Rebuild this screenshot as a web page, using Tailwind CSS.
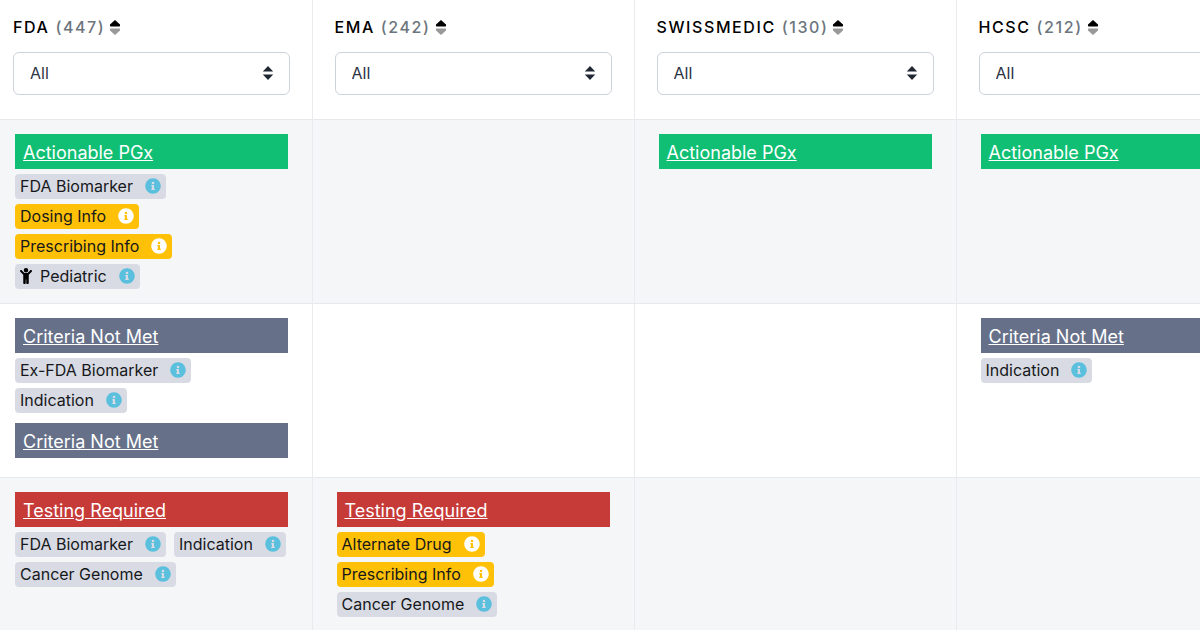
<!DOCTYPE html>
<html lang="en">
<head>
    <meta charset="UTF-8">
    <meta name="viewport" content="width=device-width, initial-scale=1.0">
    <title>Drug Label Annotations</title>
    <script src="https://cdn.jsdelivr.net/npm/@tailwindcss/browser@4"></script>
</head>
<body class="bg-white font-['Inter',sans-serif] text-black">
<!-- Shared icons -->
<svg class="hidden" aria-hidden="true">
    <symbol id="info" viewBox="0 0 512 512">
        <path fill="currentColor" d="M256 8C119 8 8 119 8 256s111 248 248 248 248-111 248-248S393 8 256 8zm0 110a42 42 0 1 1 0 84 42 42 0 0 1 0-84zm56 254a12 12 0 0 1-12 12h-88a12 12 0 0 1-12-12v-24a12 12 0 0 1 12-12h12v-64h-12a12 12 0 0 1-12-12v-24a12 12 0 0 1 12-12h64a12 12 0 0 1 12 12v100h12a12 12 0 0 1 12 12v24z"/>
    </symbol>
    <symbol id="child" viewBox="0 0 384 512">
        <path fill="currentColor" d="M120 72a72 72 0 1 1 144 0 72 72 0 0 1-144 0zm254.600 1.400c-12.500-12.500-32.800-12.500-45.300 0L242.700 160H141.300L54.600 73.400c-12.500-12.500-32.800-12.500-45.300 0s-12.500 32.800 0 45.300L104 213.300V480c0 17.700 14.300 32 32 32h16c17.700 0 32-14.300 32-32V368h16v112c0 17.700 14.300 32 32 32h16c17.700 0 32-14.300 32-32V213.300l94.600-94.600c12.500-12.500 12.500-32.800 0-45.300z"/>
    </symbol>
    <symbol id="sort" viewBox="0 0 12 15">
        <path d="M6 0 11 4.600Q11.500 6.500 10.300 6.500H1.700Q.5 6.500 1 4.600z" fill="#000"/>
        <path d="M6 15 11 10.400Q11.500 8.500 10.300 8.500H1.700Q.5 8.500 1 10.400z" fill="#999"/>
    </symbol>
    <symbol id="updown" viewBox="0 0 12 14">
        <path d="M6 0 11.200 5.500H.8zM6 14 11.200 8.500H.8z" fill="#1f2733"/>
    </symbol>
</svg>

<div class="overflow-x-hidden">
    <table class="w-[1278px] table-fixed border-collapse">
        <colgroup>
            <col class="w-[312px]">
            <col class="w-[322px]">
            <col class="w-[322px]">
            <col class="w-[322px]">
        </colgroup>
        <thead>
        <tr class="border-b border-[#e6e8eb] text-left align-top">
            <th class="border-r border-[#e9ebee] pt-[15px] pr-[22px] pb-6 pl-[13px] font-normal">
                <button type="button" class="mb-[13px] flex items-center gap-1 text-base leading-6 font-medium tracking-widest">
                    <span>FDA <span class="text-[#6c757d]">(447)</span></span>
                    <svg class="h-[15px] w-3"><use href="#sort"/></svg>
                </button>
                <div class="relative">
                    <select aria-label="FDA" class="h-[43px] w-full appearance-none rounded-md border border-[#cdd3db] bg-white px-4 pb-[2px] text-base text-[#2b3442]"><option>All</option></select>
                    <svg class="pointer-events-none absolute top-[14px] right-4 h-[14px] w-3"><use href="#updown"/></svg>
                </div>
            </th>
            <th class="border-r border-[#e9ebee] px-[22px] pt-[15px] pb-6 font-normal">
                <button type="button" class="mb-[13px] flex items-center gap-1 text-base leading-6 font-medium tracking-widest">
                    <span>EMA <span class="text-[#6c757d]">(242)</span></span>
                    <svg class="h-[15px] w-3"><use href="#sort"/></svg>
                </button>
                <div class="relative">
                    <select aria-label="EMA" class="h-[43px] w-full appearance-none rounded-md border border-[#cdd3db] bg-white px-4 pb-[2px] text-base text-[#2b3442]"><option>All</option></select>
                    <svg class="pointer-events-none absolute top-[14px] right-4 h-[14px] w-3"><use href="#updown"/></svg>
                </div>
            </th>
            <th class="border-r border-[#e9ebee] px-[22px] pt-[15px] pb-6 font-normal">
                <button type="button" class="mb-[13px] flex items-center gap-1 text-base leading-6 font-medium tracking-widest">
                    <span>SWISSMEDIC <span class="text-[#6c757d]">(130)</span></span>
                    <svg class="h-[15px] w-3"><use href="#sort"/></svg>
                </button>
                <div class="relative">
                    <select aria-label="SWISSMEDIC" class="h-[43px] w-full appearance-none rounded-md border border-[#cdd3db] bg-white px-4 pb-[2px] text-base text-[#2b3442]"><option>All</option></select>
                    <svg class="pointer-events-none absolute top-[14px] right-4 h-[14px] w-3"><use href="#updown"/></svg>
                </div>
            </th>
            <th class="px-[22px] pt-[15px] pb-6 font-normal">
                <button type="button" class="mb-[13px] flex items-center gap-1 text-base leading-6 font-medium tracking-widest">
                    <span>HCSC <span class="text-[#6c757d]">(212)</span></span>
                    <svg class="h-[15px] w-3"><use href="#sort"/></svg>
                </button>
                <div class="relative">
                    <select aria-label="HCSC" class="h-[43px] w-full appearance-none rounded-md border border-[#cdd3db] bg-white px-4 pb-[2px] text-base text-[#2b3442]"><option>All</option></select>
                    <svg class="pointer-events-none absolute top-[14px] right-4 h-[14px] w-3"><use href="#updown"/></svg>
                </div>
            </th>
        </tr>
        </thead>
        <tbody>
        <tr class="border-b border-[#e6e8eb] bg-[#f5f6f8] align-top">
            <td class="border-r border-[#e9ebee] py-[14px] pr-6 pl-[15px]">
                <a href="#" class="mb-[5px] block bg-[#10bf74] px-2 pt-[2px] text-lg leading-[33px] text-white underline">Actionable PGx</a>
                <div class="flex flex-col items-start gap-[5px]">
                    <span class="flex h-[25px] items-center gap-3 rounded bg-[#d8dbe3] px-[5px] pb-[2px] text-base text-[#16181b]">FDA Biomarker <svg class="size-4 text-[#5bc0de]"><use href="#info"/></svg></span>
                    <span class="flex h-[25px] items-center gap-3 rounded bg-[#ffc107] px-[5px] pb-[2px] text-base text-[#16181b]">Dosing Info <svg class="size-4 text-white"><use href="#info"/></svg></span>
                    <span class="flex h-[25px] items-center gap-3 rounded bg-[#ffc107] px-[5px] pb-[2px] text-base text-[#16181b]">Prescribing Info <svg class="size-4 text-white"><use href="#info"/></svg></span>
                    <span class="flex h-[25px] items-center gap-3 rounded bg-[#d8dbe3] px-[5px] pb-[2px] text-base text-[#16181b]"><span class="flex items-center gap-2"><svg class="h-4 w-3 text-black"><use href="#child"/></svg>Pediatric</span> <svg class="size-4 text-[#5bc0de]"><use href="#info"/></svg></span>
                </div>
            </td>
            <td class="border-r border-[#e9ebee]"></td>
            <td class="border-r border-[#e9ebee] px-6 py-[14px]">
                <a href="#" class="mb-[5px] block bg-[#10bf74] px-2 pt-[2px] text-lg leading-[33px] text-white underline">Actionable PGx</a>
            </td>
            <td class="px-6 py-[14px]">
                <a href="#" class="mb-[5px] block bg-[#10bf74] px-2 pt-[2px] text-lg leading-[33px] text-white underline">Actionable PGx</a>
            </td>
        </tr>
        <tr class="border-b border-[#e6e8eb] bg-white align-top">
            <td class="border-r border-[#e9ebee] py-[14px] pr-6 pl-[15px]">
                <a href="#" class="mb-[5px] block bg-[#667189] px-2 pt-[2px] text-lg leading-[33px] text-white underline">Criteria Not Met</a>
                <div class="mb-[10px] flex flex-col items-start gap-[5px]">
                    <span class="flex h-[25px] items-center gap-3 rounded bg-[#d8dbe3] px-[5px] pb-[2px] text-base text-[#16181b]">Ex-FDA Biomarker <svg class="size-4 text-[#5bc0de]"><use href="#info"/></svg></span>
                    <span class="flex h-[25px] items-center gap-3 rounded bg-[#d8dbe3] px-[5px] pb-[2px] text-base text-[#16181b]">Indication <svg class="size-4 text-[#5bc0de]"><use href="#info"/></svg></span>
                </div>
                <a href="#" class="mb-[5px] block bg-[#667189] px-2 pt-[2px] text-lg leading-[33px] text-white underline">Criteria Not Met</a>
            </td>
            <td class="border-r border-[#e9ebee]"></td>
            <td class="border-r border-[#e9ebee]"></td>
            <td class="px-6 py-[14px]">
                <a href="#" class="mb-[5px] block bg-[#667189] px-2 pt-[2px] text-lg leading-[33px] text-white underline">Criteria Not Met</a>
                <div class="flex flex-col items-start gap-[5px]">
                    <span class="flex h-[25px] items-center gap-3 rounded bg-[#d8dbe3] px-[5px] pb-[2px] text-base text-[#16181b]">Indication <svg class="size-4 text-[#5bc0de]"><use href="#info"/></svg></span>
                </div>
            </td>
        </tr>
        <tr class="bg-[#f5f6f8] align-top">
            <td class="border-r border-[#e9ebee] py-[14px] pr-6 pl-[15px]">
                <a href="#" class="mb-[5px] block bg-[#c63a38] px-2 pt-[2px] text-lg leading-[33px] text-white underline">Testing Required</a>
                <div class="flex flex-wrap gap-x-2 gap-y-[5px]">
                    <span class="flex h-[25px] items-center gap-3 rounded bg-[#d8dbe3] px-[5px] pb-[2px] text-base text-[#16181b]">FDA Biomarker <svg class="size-4 text-[#5bc0de]"><use href="#info"/></svg></span>
                    <span class="flex h-[25px] items-center gap-3 rounded bg-[#d8dbe3] px-[5px] pb-[2px] text-base text-[#16181b]">Indication <svg class="size-4 text-[#5bc0de]"><use href="#info"/></svg></span>
                    <span class="flex h-[25px] items-center gap-3 rounded bg-[#d8dbe3] px-[5px] pb-[2px] text-base text-[#16181b]">Cancer Genome <svg class="size-4 text-[#5bc0de]"><use href="#info"/></svg></span>
                </div>
            </td>
            <td class="border-r border-[#e9ebee] px-6 py-[14px]">
                <a href="#" class="mb-[5px] block bg-[#c63a38] px-2 pt-[2px] text-lg leading-[33px] text-white underline">Testing Required</a>
                <div class="flex flex-col items-start gap-[5px]">
                    <span class="flex h-[25px] items-center gap-3 rounded bg-[#ffc107] px-[5px] pb-[2px] text-base text-[#16181b]">Alternate Drug <svg class="size-4 text-white"><use href="#info"/></svg></span>
                    <span class="flex h-[25px] items-center gap-3 rounded bg-[#ffc107] px-[5px] pb-[2px] text-base text-[#16181b]">Prescribing Info <svg class="size-4 text-white"><use href="#info"/></svg></span>
                    <span class="flex h-[25px] items-center gap-3 rounded bg-[#d8dbe3] px-[5px] pb-[2px] text-base text-[#16181b]">Cancer Genome <svg class="size-4 text-[#5bc0de]"><use href="#info"/></svg></span>
                </div>
            </td>
            <td class="border-r border-[#e9ebee]"></td>
            <td></td>
        </tr>
        </tbody>
    </table>
</div>
</body>
</html>
